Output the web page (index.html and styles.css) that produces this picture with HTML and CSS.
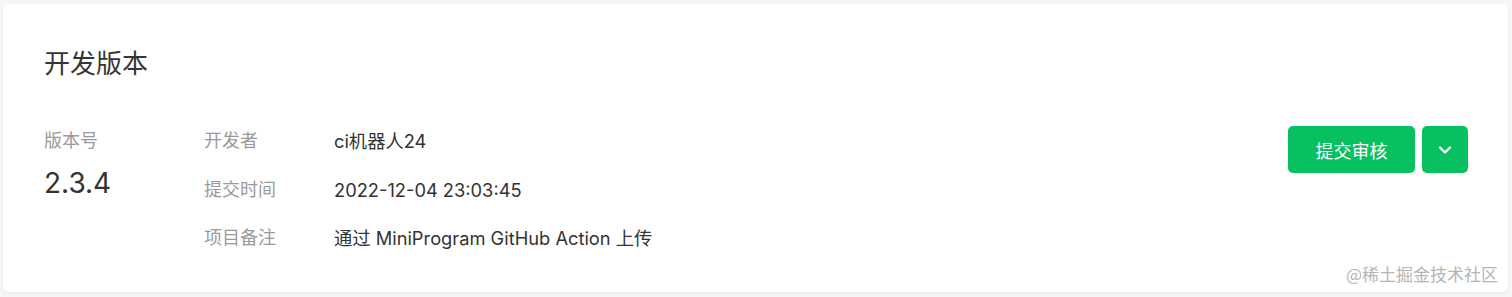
FILE: index.html
```html
<!DOCTYPE html>
<html lang="zh-CN">
<head>
<meta charset="utf-8">
<link rel="stylesheet" href="styles.css">
</head>
<body>
<div class="card">
  <h2 class="title">开发版本</h2>
  <div class="body">
    <div class="version">
      <div class="label">版本号</div>
      <div class="version-num">2.3.4</div>
    </div>
    <div class="info">
      <div class="row"><span class="label col">开发者</span><span class="value">ci机器人24</span></div>
      <div class="row"><span class="label col">提交时间</span><span class="value">2022-12-04 23:03:45</span></div>
      <div class="row"><span class="label col">项目备注</span><span class="value">通过 MiniProgram GitHub Action 上传</span></div>
    </div>
    <div class="actions">
      <button class="btn">提交审核</button>
      <button class="btn btn-icon" aria-label="更多">
        <svg width="14" height="10" viewBox="0 0 14 10"><path d="M2 2.5 L7 7.5 L12 2.5" fill="none" stroke="#fff" stroke-width="2.4" stroke-linecap="round" stroke-linejoin="round"/></svg>
      </button>
    </div>
  </div>
  <div class="watermark">@稀土掘金技术社区</div>
</div>
</body>
</html>
```
FILE: styles.css
```css
html, body {
  margin: 0;
  padding: 0;
}
body {
  background: #f5f6f7;
  font-family: Inter, "Noto Sans CJK SC", sans-serif;
  color: #333;
  padding: 4px 4px 5px 3px;
  height: 297px;
  box-sizing: border-box;
}
.card {
  position: relative;
  background: #fff;
  border-radius: 5px;
  box-shadow: 0 1px 3px rgba(0,0,0,0.08);
  height: 288px;
  box-sizing: border-box;
  padding: 41px 40px 0 41px;
}
.title {
  margin: 0;
  font-size: 26px;
  font-weight: 400;
  line-height: 38px;
  color: #353535;
}
.body {
  display: flex;
  margin-top: 46px;
}
.version {
  width: 160px;
}
.label {
  font-size: 18px;
  color: #9a9a9a;
  line-height: 24px;
}
.version-num {
  font-size: 28px;
  line-height: 36px;
  margin-top: 12px;
  color: #333;
}
.info {
  flex: 1;
  display: flex;
  flex-direction: column;
  gap: 24.5px;
}
.row {
  display: flex;
  line-height: 24px;
}
.col {
  width: 130px;
}
.value {
  font-size: 18.3px;
  color: #333;
}
.actions {
  display: flex;
  gap: 7px;
  margin-top: -3px;
  align-self: flex-start;
}
.btn {
  height: 47px;
  width: 127px;
  border: 0;
  border-radius: 5px;
  background: #07c160;
  color: #fff;
  font-family: inherit;
  font-size: 18px;
  display: flex;
  align-items: center;
  justify-content: center;
  padding: 0;
}
.btn-icon {
  width: 46px;
}
.watermark {
  position: absolute;
  right: 10px;
  bottom: 6px;
  font-size: 17px;
  color: #b5b5b5;
  font-family: "Noto Sans CJK SC", sans-serif;
}
```
